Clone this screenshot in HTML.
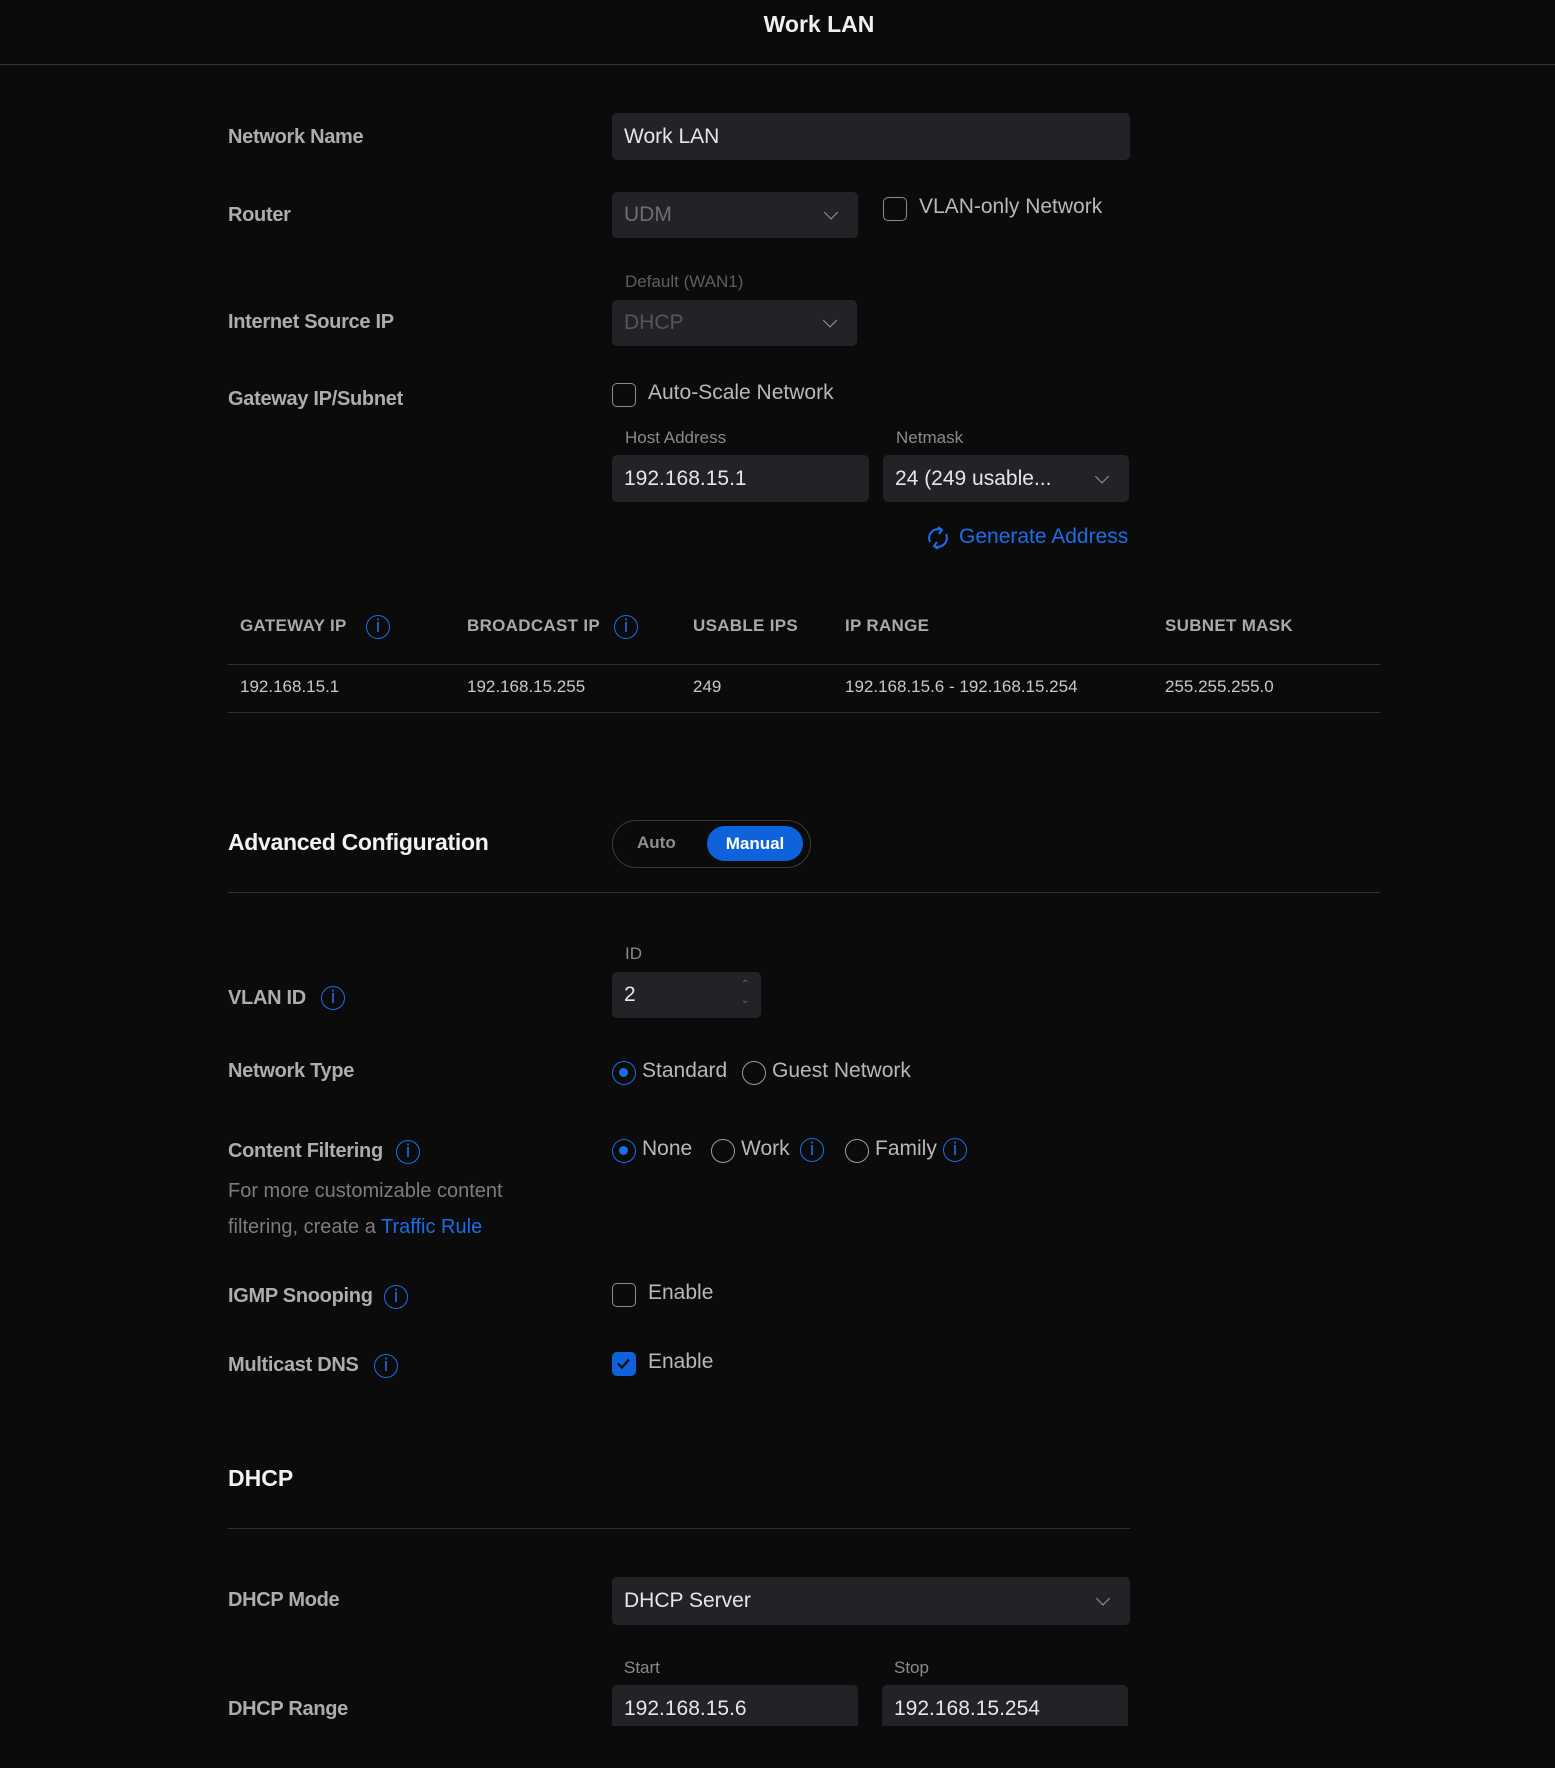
<!DOCTYPE html>
<html><head><meta charset="utf-8"><style>
*{box-sizing:border-box;margin:0;padding:0}
body{width:1555px;height:1768px;background:#0b0b0c;font-family:"Liberation Sans",sans-serif;color:#b4b4b6;position:relative;overflow:hidden}
.a{position:absolute;white-space:nowrap}
.lbl{font-size:20px;color:#adadb0;font-weight:bold;letter-spacing:-0.3px}
.inp{position:absolute;background:#222326;border-radius:5px;font-size:21px;color:#e6e6e8;padding-left:12px;display:flex;align-items:center}
.dis{color:#6e6e72}
.small{font-size:17px;color:#8a8a8e}
.chev{position:absolute;right:22px;top:50%;width:10px;height:10px;border-right:1.5px solid #9a9a9e;border-bottom:1.5px solid #9a9a9e;transform:translateY(-75%) rotate(45deg)}
.cb{position:absolute;width:24px;height:24px;border:1.5px solid #8c8c90;border-radius:5px}
.rad{position:absolute;width:24px;height:24px;border:1.5px solid #9c9ca0;border-radius:50%}
.rad.on{border-color:#1a6ee8}
.rad.on:after{content:"";position:absolute;left:6px;top:6px;width:9px;height:9px;border-radius:50%;background:#1a6ee8}
.info{position:absolute;width:24px;height:24px;border:1.8px solid #1a6ee8;border-radius:50%;color:#1a6ee8;font-size:18px;text-align:center;line-height:21px;font-family:"DejaVu Sans",sans-serif}
.opt{font-size:21px;color:#b8b8bb}
.th{font-size:17px;font-weight:bold;color:#a9a9ac;letter-spacing:0.3px}
.td{font-size:17px;color:#c8c8ca}
.hr{position:absolute;height:1px;background:#2f3034}
</style></head><body>
<div class="a" style="left:0;width:1638px;top:11px;text-align:center;font-size:23px;font-weight:bold;color:#f0f0f2">Work LAN</div>
<div class="hr" style="left:0;width:1555px;top:64px;background:#333438"></div>

<div class="a lbl" style="left:228px;top:126px">Network Name</div>
<div class="inp" style="left:612px;top:113px;width:518px;height:47px">Work LAN</div>

<div class="a lbl" style="left:228px;top:204px">Router</div>
<div class="inp dis" style="left:612px;top:192px;width:246px;height:46px">UDM<span class="chev"></span></div>
<div class="cb" style="left:883px;top:197px"></div>
<div class="a opt" style="left:919px;top:195px">VLAN-only Network</div>

<div class="a small" style="left:625px;top:272px;color:#5e5e62">Default (WAN1)</div>
<div class="a lbl" style="left:228px;top:311px">Internet Source IP</div>
<div class="inp dis" style="left:612px;top:300px;width:245px;height:46px;color:#55555a">DHCP<span class="chev"></span></div>

<div class="a lbl" style="left:228px;top:388px">Gateway IP/Subnet</div>
<div class="cb" style="left:612px;top:383px"></div>
<div class="a opt" style="left:648px;top:381px">Auto-Scale Network</div>
<div class="a small" style="left:625px;top:428px">Host Address</div>
<div class="a small" style="left:896px;top:428px">Netmask</div>
<div class="inp" style="left:612px;top:455px;width:257px;height:47px">192.168.15.1</div>
<div class="inp" style="left:883px;top:455px;width:246px;height:47px">24 (249 usable...<span class="chev"></span></div>
<svg class="a" style="left:925px;top:525px" width="26" height="26" viewBox="0 0 26 26" fill="none" stroke="#1a6ee8" stroke-width="2"><path d="M5 17A9 9 0 0 1 17 5"/><path d="M21 9A9 9 0 0 1 9 21"/><path d="M13 2l4 3-3 4"/><path d="M13 24l-4-3 3-4"/></svg>
<div class="a" style="left:959px;top:525px;font-size:21px;color:#1a6ee8">Generate Address</div>

<div class="a th" style="left:240px;top:616px">GATEWAY IP</div><div class="info" style="left:366px;top:615px">i</div>
<div class="a th" style="left:467px;top:616px">BROADCAST IP</div><div class="info" style="left:614px;top:615px">i</div>
<div class="a th" style="left:693px;top:616px">USABLE IPS</div>
<div class="a th" style="left:845px;top:616px">IP RANGE</div>
<div class="a th" style="left:1165px;top:616px">SUBNET MASK</div>
<div class="hr" style="left:228px;width:1152px;top:664px"></div>
<div class="a td" style="left:240px;top:677px">192.168.15.1</div>
<div class="a td" style="left:467px;top:677px">192.168.15.255</div>
<div class="a td" style="left:693px;top:677px">249</div>
<div class="a td" style="left:845px;top:677px">192.168.15.6 - 192.168.15.254</div>
<div class="a td" style="left:1165px;top:677px">255.255.255.0</div>
<div class="hr" style="left:228px;width:1152px;top:712px"></div>

<div class="a" style="left:228px;top:829px;font-size:23px;font-weight:bold;color:#f2f2f4;letter-spacing:-0.3px">Advanced Configuration</div>
<div class="a" style="left:612px;top:820px;width:199px;height:48px;border:1px solid #3a3b3f;border-radius:24px"></div>
<div class="a" style="left:637px;top:833px;font-size:17px;font-weight:bold;color:#8e8e92">Auto</div>
<div class="a" style="left:707px;top:826px;width:96px;height:35px;border-radius:18px;background:#0e62dc;color:#fff;font-size:17px;font-weight:bold;text-align:center;line-height:35px">Manual</div>
<div class="hr" style="left:228px;width:1152px;top:892px"></div>

<div class="a small" style="left:625px;top:944px">ID</div>
<div class="a lbl" style="left:228px;top:987px">VLAN ID</div><div class="info" style="left:321px;top:986px">i</div>
<div class="inp" style="left:612px;top:972px;width:149px;height:46px">2</div>
<div class="a" style="left:741px;top:979px;font-size:10px;color:#6a6a6e">&#8963;</div>
<div class="a" style="left:741px;top:995px;font-size:10px;color:#6a6a6e">&#8964;</div>

<div class="a lbl" style="left:228px;top:1060px">Network Type</div>
<div class="rad on" style="left:612px;top:1061px"></div><div class="a opt" style="left:642px;top:1059px">Standard</div>
<div class="rad" style="left:742px;top:1061px"></div><div class="a opt" style="left:772px;top:1059px">Guest Network</div>

<div class="a lbl" style="left:228px;top:1140px">Content Filtering</div><div class="info" style="left:396px;top:1140px">i</div>
<div class="a" style="left:228px;top:1180px;font-size:20px;color:#7c7c80">For more customizable content</div>
<div class="a" style="left:228px;top:1216px;font-size:20px;color:#7c7c80">filtering, create a <span style="color:#1a6ee8">Traffic Rule</span></div>
<div class="rad on" style="left:612px;top:1139px"></div><div class="a opt" style="left:642px;top:1137px">None</div>
<div class="rad" style="left:711px;top:1139px"></div><div class="a opt" style="left:741px;top:1137px">Work</div><div class="info" style="left:800px;top:1138px">i</div>
<div class="rad" style="left:845px;top:1139px"></div><div class="a opt" style="left:875px;top:1137px">Family</div><div class="info" style="left:943px;top:1138px">i</div>

<div class="a lbl" style="left:228px;top:1285px">IGMP Snooping</div><div class="info" style="left:384px;top:1285px">i</div>
<div class="cb" style="left:612px;top:1283px"></div><div class="a opt" style="left:648px;top:1281px">Enable</div>

<div class="a lbl" style="left:228px;top:1354px">Multicast DNS</div><div class="info" style="left:374px;top:1354px">i</div>
<div class="cb" style="left:612px;top:1352px;background:#0e62dc;border-color:#0e62dc"><svg width="21" height="21" viewBox="0 0 21 21" fill="none" stroke="#0b0b0c" stroke-width="2.2"><path d="M5 10.5l4 4 7-8"/></svg></div>
<div class="a opt" style="left:648px;top:1350px">Enable</div>

<div class="a" style="left:228px;top:1465px;font-size:23px;font-weight:bold;color:#f2f2f4">DHCP</div>
<div class="hr" style="left:228px;width:902px;top:1528px"></div>

<div class="a lbl" style="left:228px;top:1589px">DHCP Mode</div>
<div class="inp" style="left:612px;top:1577px;width:518px;height:48px">DHCP Server<span class="chev"></span></div>

<div class="a small" style="left:624px;top:1658px">Start</div>
<div class="a small" style="left:894px;top:1658px">Stop</div>
<div class="a lbl" style="left:228px;top:1698px">DHCP Range</div>
<div class="inp" style="left:612px;top:1685px;width:246px;height:41px;border-radius:5px 5px 0 0;padding-top:6px">192.168.15.6</div>
<div class="inp" style="left:882px;top:1685px;width:246px;height:41px;border-radius:5px 5px 0 0;padding-top:6px">192.168.15.254</div>
</body></html>
